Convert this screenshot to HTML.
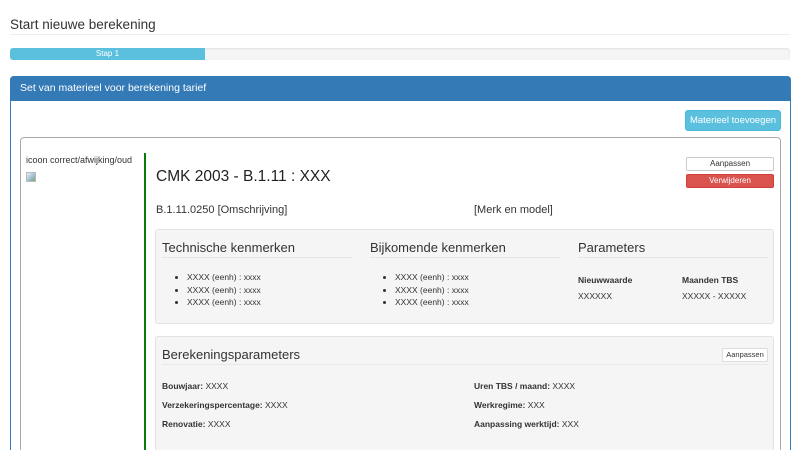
<!DOCTYPE html>
<html><head><meta charset="utf-8"><style>
*{box-sizing:border-box;margin:0;padding:0}
html,body{width:800px;height:450px;overflow:hidden}
body{background:#fff;font-family:"Liberation Sans",sans-serif;color:#333;position:relative}
.a{position:absolute;white-space:nowrap}
ul{list-style:disc}
</style></head><body>
<div class="a" style="left:10px;top:17px;font-size:13.5px">Start nieuwe berekening</div>
<div class="a" style="left:10px;top:34px;width:780px;height:1px;background:#eee"></div>
<div class="a" style="left:10px;top:48px;width:780px;height:12px;background:#f5f5f5;border-radius:3px;box-shadow:inset 0 1px 2px rgba(0,0,0,.08)"></div>
<div class="a" style="left:10px;top:48px;width:195px;height:12px;background:#5bc0de;border-radius:3px 0 0 3px;color:#fff;font-size:8px;line-height:12px;text-align:center">Stap 1</div>
<div class="a" style="left:10px;top:76px;width:781px;height:380px;border:1px solid #337ab7;border-radius:4px 4px 0 0"></div>
<div class="a" style="left:10px;top:76px;width:781px;height:25px;background:#337ab7;border-radius:4px 4px 0 0;color:#fff;font-size:10.5px;line-height:24px;padding-left:10px">Set van materieel voor berekening tarief</div>
<div class="a" style="left:685px;top:110px;width:96px;height:21px;background:#5bc0de;border:1px solid #46b8da;border-radius:3px;color:#fff;font-size:9.5px;line-height:19px;text-align:center">Materieel toevoegen</div>
<div class="a" style="left:20px;top:137px;width:761px;height:330px;border:1px solid #aaa;border-radius:4px"></div>
<div class="a" style="left:26px;top:155px;font-size:9px">icoon correct/afwijking/oud</div>
<div class="a" style="left:26px;top:172px;width:10px;height:10px;border:1px solid #bbb;background:linear-gradient(135deg,#eef 0,#9bc 60%,#7a7 100%)"></div>
<div class="a" style="left:144px;top:153px;width:2px;height:300px;background:#0a7a0a"></div>
<div class="a" style="left:156px;top:168px;font-size:15.5px;color:#222">CMK 2003 - B.1.11 : XXX</div>
<div class="a" style="left:686px;top:157px;width:88px;height:14px;border:1px solid #ccc;border-radius:2px;font-size:8px;line-height:12px;text-align:center">Aanpassen</div>
<div class="a" style="left:686px;top:174px;width:88px;height:14px;background:#d9534f;border:1px solid #d43f3a;border-radius:2px;font-size:8px;line-height:12px;text-align:center;color:#fff">Verwijderen</div>
<div class="a" style="left:156px;top:204px;font-size:11px">B.1.11.0250 [Omschrijving]</div>
<div class="a" style="left:474px;top:204px;font-size:11px">[Merk en model]</div>

<div class="a" style="left:155px;top:229px;width:619px;height:95px;background:#f5f5f5;border:1px solid #e3e3e3;border-radius:3px"></div>
<div class="a" style="left:162px;top:240px;font-size:13px">Technische kenmerken</div>
<div class="a" style="left:162px;top:257px;width:190px;height:1px;background:#e6e6e6"></div>
<div class="a" style="left:370px;top:240px;font-size:13px">Bijkomende kenmerken</div>
<div class="a" style="left:370px;top:257px;width:190px;height:1px;background:#e6e6e6"></div>
<div class="a" style="left:578px;top:240px;font-size:13px">Parameters</div>
<div class="a" style="left:578px;top:257px;width:190px;height:1px;background:#e6e6e6"></div>
<ul class="a" style="left:187px;top:271px;font-size:8.5px;line-height:12.5px"><li>XXXX (eenh) : xxxx</li><li>XXXX (eenh) : xxxx</li><li>XXXX (eenh) : xxxx</li></ul>
<ul class="a" style="left:395px;top:271px;font-size:8.5px;line-height:12.5px"><li>XXXX (eenh) : xxxx</li><li>XXXX (eenh) : xxxx</li><li>XXXX (eenh) : xxxx</li></ul>
<div class="a" style="left:578px;top:275px;font-size:8.5px;font-weight:bold">Nieuwwaarde</div>
<div class="a" style="left:682px;top:275px;font-size:8.5px;font-weight:bold">Maanden TBS</div>
<div class="a" style="left:578px;top:291px;font-size:8.5px">XXXXXX</div>
<div class="a" style="left:682px;top:291px;font-size:8.5px">XXXXX - XXXXX</div>

<div class="a" style="left:155px;top:336px;width:619px;height:130px;background:#f5f5f5;border:1px solid #e3e3e3;border-radius:3px"></div>
<div class="a" style="left:162px;top:347px;font-size:13px">Berekeningsparameters</div>
<div class="a" style="left:162px;top:364px;width:606px;height:1px;background:#e8e8e8"></div>
<div class="a" style="left:722px;top:348px;width:46px;height:14px;background:#fff;border:1px solid #ddd;border-radius:2px;font-size:7.5px;line-height:12px;text-align:center">Aanpassen</div>
<div class="a" style="left:162px;top:381px;font-size:8.5px"><b>Bouwjaar:</b> XXXX</div>
<div class="a" style="left:162px;top:400px;font-size:8.5px"><b>Verzekeringspercentage:</b> XXXX</div>
<div class="a" style="left:162px;top:419px;font-size:8.5px"><b>Renovatie:</b> XXXX</div>
<div class="a" style="left:474px;top:381px;font-size:8.5px"><b>Uren TBS / maand:</b> XXXX</div>
<div class="a" style="left:474px;top:400px;font-size:8.5px"><b>Werkregime:</b> XXX</div>
<div class="a" style="left:474px;top:419px;font-size:8.5px"><b>Aanpassing werktijd:</b> XXX</div>
</body></html>
